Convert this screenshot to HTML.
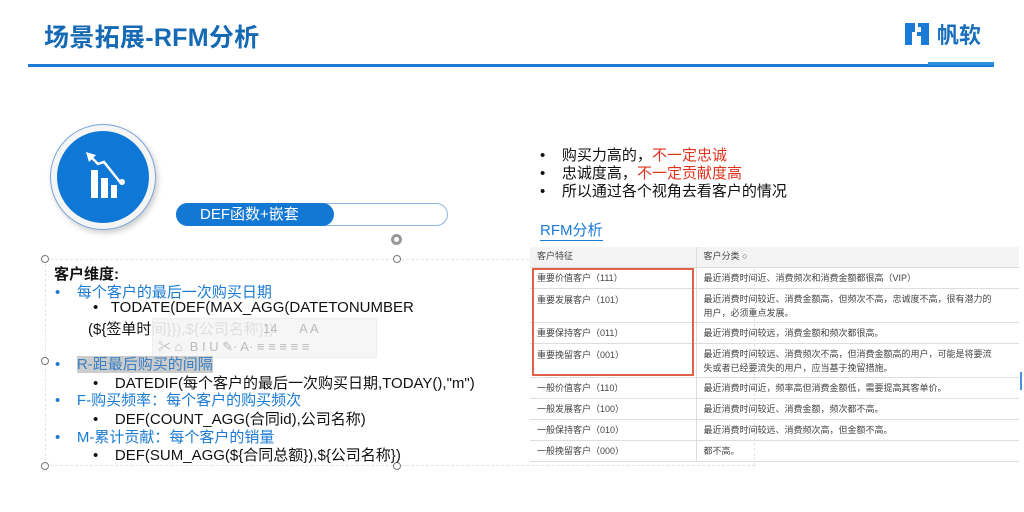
<!DOCTYPE html>
<html><head><meta charset="utf-8"><style>
*{margin:0;padding:0;box-sizing:border-box}
body{width:1024px;height:512px;background:#fff;font-family:"Liberation Sans","Noto Sans CJK SC",sans-serif;position:relative;overflow:hidden}
.a{position:absolute;white-space:nowrap}
.t{font-size:15px;color:#111}
.b{color:#1a7ad4}
table{border-collapse:collapse;font-size:9px;color:#444}
td{border-bottom:1px solid #ddd;padding:0 7px;vertical-align:top}
.h{position:absolute;width:8px;height:8px;border:1px solid #777;border-radius:50%;background:#fff}
</style></head><body>
<div class="a" style="left:44px;top:18px;font-size:25px;font-weight:bold;color:#1569b5;letter-spacing:0.3px">场景拓展-RFM分析</div>
<div class="a" style="left:28px;top:64px;width:966px;height:3px;background:#1a7ad4"></div>
<svg class="a" style="left:902px;top:19px" width="30" height="30" viewBox="0 0 30 30"><path d="M3 4h10v9h-3v13H3z M16 4h11v22h-8V17h-4v-4h4V8h-3z" fill="#1a7ad4"/></svg>
<div class="a" style="left:937px;top:18px;font-size:22px;font-weight:bold;color:#1a6fbd">帆软</div>
<div class="a" style="left:928px;top:62px;width:66px;height:3px;background:#2a90e0"></div>
<div class="a" style="left:50px;top:124px;width:106px;height:106px;border-radius:50%;background:#f5f5f5;border:1px solid #7aa6dd;box-shadow:2px 3px 6px rgba(0,0,0,.2)"></div>
<div class="a" style="left:57px;top:131px;width:92px;height:92px;border-radius:50%;background:#0f78d6"></div>
<svg class="a" style="left:84px;top:152px" width="44" height="50" viewBox="0 0 44 50"><rect x="7" y="18" width="7" height="28" fill="#fff"/><rect x="17" y="26" width="7" height="20" fill="#fff"/><rect x="27" y="33" width="6" height="13" fill="#fff"/><path d="M6 4l8 8 6-2 16 20" stroke="#fff" stroke-width="2.5" fill="none"/><path d="M2 0l10 3-7 7z" fill="#fff"/><circle cx="38" cy="30" r="3" fill="#fff"/></svg>
<div class="a" style="left:176px;top:203px;width:272px;height:23px;border-radius:12px;border:1px solid #8fb5e3;background:#fff"></div>
<div class="a" style="left:176px;top:203px;width:158px;height:23px;border-radius:12px;background:#1377d4;color:#fff;font-size:15px;line-height:23px;padding-left:24px">DEF函数+嵌套</div>
<div class="a" style="left:45px;top:259px;width:710px;height:207px;border:1px dashed #e4e4e4"></div>
<div class="h" style="left:41px;top:255px"></div><div class="h" style="left:393px;top:255px"></div>
<div class="h" style="left:41px;top:357px"></div><div class="h" style="left:41px;top:462px"></div><div class="h" style="left:393px;top:462px"></div>
<div class="a" style="left:391px;top:234px;width:11px;height:11px;border-radius:50%;border:3px solid #999"></div>
<div class="a t" style="left:54px;top:263px;font-weight:bold">客户维度:</div>
<div class="a t b" style="left:55px;top:281px">•&nbsp;&nbsp;&nbsp;&nbsp;每个客户的最后一次购买日期</div>
<div class="a t" style="left:93px;top:299px">•&nbsp;&nbsp;&nbsp;TODATE(DEF(MAX_AGG(DATETONUMBER</div>
<div class="a t" style="left:88px;top:318px">(${签单时间}}),${公司名称}))</div>
<div class="a" style="left:152px;top:318px;width:225px;height:40px;background:rgba(245,245,245,.9);border:1px solid #eee;font-size:13px;color:#bbb;padding:2px 0 0 110px">14 &nbsp;&nbsp;&nbsp;&nbsp;&nbsp;A A<br><span style="margin-left:-105px">✂ ⌂ &nbsp;B I U ✎· A· ≡ ≡ ≡ ≡ ≡</span></div>
<div class="a t b" style="left:55px;top:353px">•&nbsp;&nbsp;&nbsp;&nbsp;<span style="background:#ccc;color:#3a7fc6">R-距最后购买的间隔</span></div>
<div class="a t" style="left:93px;top:372px">•&nbsp;&nbsp;&nbsp;&nbsp;DATEDIF(每个客户的最后一次购买日期,TODAY(),"m")</div>
<div class="a t b" style="left:55px;top:389px">•&nbsp;&nbsp;&nbsp;&nbsp;F-购买频率：每个客户的购买频次</div>
<div class="a t" style="left:93px;top:408px">•&nbsp;&nbsp;&nbsp;&nbsp;DEF(COUNT_AGG(合同id),公司名称)</div>
<div class="a t b" style="left:55px;top:426px">•&nbsp;&nbsp;&nbsp;&nbsp;M-累计贡献：每个客户的销量</div>
<div class="a t" style="left:93px;top:444px">•&nbsp;&nbsp;&nbsp;&nbsp;DEF(SUM_AGG(${合同总额}),${公司名称})</div>
<div class="a t" style="left:540px;top:147px;line-height:18px">•&nbsp;&nbsp;&nbsp;&nbsp;购买力高的，<span style="color:#e0321e">不一定忠诚</span><br>•&nbsp;&nbsp;&nbsp;&nbsp;忠诚度高，<span style="color:#e0321e">不一定贡献度高</span><br>•&nbsp;&nbsp;&nbsp;&nbsp;所以通过各个视角去看客户的情况</div>
<div class="a" style="left:540px;top:219px;font-size:15px;color:#1a7ad4;border-bottom:1px solid #1a7ad4">RFM分析</div>
<table class="a" style="left:530px;top:247px;width:489px">
<tr style="height:20px;background:#f3f3f3"><td style="width:166px;line-height:19px;border-right:1px solid #ddd">客户特征</td><td style="line-height:19px">客户分类 ○</td></tr>
<tr style="height:21px"><td style="line-height:20px;border-right:1px solid #ddd">重要价值客户（111）</td><td style="line-height:20px">最近消费时间近、消费频次和消费金额都很高（VIP）</td></tr>
<tr style="height:34px"><td style="padding-top:4px;border-right:1px solid #ddd">重要发展客户（101）</td><td style="padding-top:3px;line-height:14px">最近消费时间较近、消费金额高，但频次不高，忠诚度不高，很有潜力的<br>用户，必须重点发展。</td></tr>
<tr style="height:21px"><td style="line-height:20px;border-right:1px solid #ddd">重要保持客户（011）</td><td style="line-height:20px">最近消费时间较远，消费金额和频次都很高。</td></tr>
<tr style="height:34px"><td style="padding-top:4px;border-right:1px solid #ddd">重要挽留客户（001）</td><td style="padding-top:3px;line-height:14px">最近消费时间较远、消费频次不高，但消费金额高的用户，可能是将要流<br>失或者已经要流失的用户，应当基于挽留措施。</td></tr>
<tr style="height:21px"><td style="line-height:20px;border-right:1px solid #ddd">一般价值客户（110）</td><td style="line-height:20px">最近消费时间近，频率高但消费金额低，需要提高其客单价。</td></tr>
<tr style="height:21px"><td style="line-height:20px;border-right:1px solid #ddd">一般发展客户（100）</td><td style="line-height:20px">最近消费时间较近、消费金额，频次都不高。</td></tr>
<tr style="height:21px"><td style="line-height:20px;border-right:1px solid #ddd">一般保持客户（010）</td><td style="line-height:20px">最近消费时间较远、消费频次高，但金额不高。</td></tr>
<tr style="height:21px"><td style="line-height:20px;border-right:1px solid #ddd">一般挽留客户（000）</td><td style="line-height:20px">都不高。</td></tr>
</table>
<div class="a" style="left:532px;top:268px;width:162px;height:108px;border:2px solid #e0604a"></div>
<div class="a" style="left:1020px;top:372px;width:2px;height:18px;background:#4a90e2"></div>
</body></html>
